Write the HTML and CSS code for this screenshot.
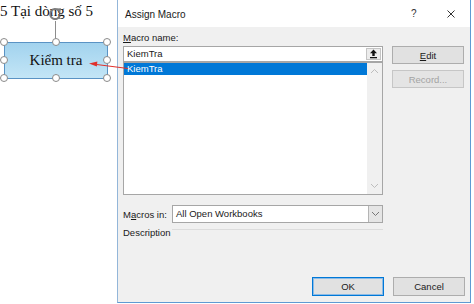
FILE: index.html
```html
<!DOCTYPE html>
<html lang="vi">
<head>
  <meta charset="UTF-8">
  <title>Assign Macro</title>
  <link rel="stylesheet" href="styles.css">
</head>
<body>
  <!-- worksheet area with the shape -->
  <div class="sheet">
    <p class="cell-text">5 Tại dòng số 5</p>
    <div class="rotate-line"></div>
    <svg class="rotate-handle" width="14" height="14" viewBox="0 0 14 14">
      <path d="M10.6 3.4 A5 5 0 1 0 12 8.4" fill="none" stroke="#7d7d7d" stroke-width="2"/>
      <polygon points="8,1.6 13,1.2 12.2,6.2" fill="#7d7d7d"/>
    </svg>
    <div class="shape">Kiểm tra</div>
    <span class="handle h-tl"></span>
    <span class="handle h-tc"></span>
    <span class="handle h-tr"></span>
    <span class="handle h-ml"></span>
    <span class="handle h-mr"></span>
    <span class="handle h-bl"></span>
    <span class="handle h-bc"></span>
    <span class="handle h-br"></span>
  </div>

  <div class="dialog">
    <div class="title-bar">
      <span class="title">Assign Macro</span>
      <span class="help">?</span>
      <svg class="close" width="8" height="8" viewBox="0 0 8 8">
        <path d="M0.5 0.5 L7.5 7.5 M7.5 0.5 L0.5 7.5" stroke="#333" stroke-width="1"/>
      </svg>
    </div>

    <div class="dialog-body">
      <div class="main-col">
        <div class="field-label"><u>M</u>acro name:</div>
        <div class="name-box">
          <span class="name-value">KiemTra</span>
          <span class="collapse-btn">
            <svg width="9" height="10" viewBox="0 0 9 10">
              <polygon points="4.5,0.5 8,4.2 1,4.2" fill="#111"/>
              <rect x="3.3" y="4" width="2.4" height="3" fill="#111"/>
              <rect x="1" y="8" width="7" height="1.3" fill="#111"/>
            </svg>
          </span>
        </div>
        <div class="macro-list">
          <div class="list-items">
            <div class="list-item selected">KiemTra</div>
          </div>
          <div class="scrollbar">
            <svg width="9" height="6" viewBox="0 0 9 6"><path d="M1 5 L4.5 1.5 L8 5" fill="none" stroke="#bdbdbd" stroke-width="1"/></svg>
            <svg width="9" height="6" viewBox="0 0 9 6"><path d="M1 1 L4.5 4.5 L8 1" fill="none" stroke="#bdbdbd" stroke-width="1"/></svg>
          </div>
        </div>
        <div class="macros-in">
          <span class="row-label">M<u>a</u>cros in:</span>
          <div class="select">
            <span class="select-value">All Open Workbooks</span>
            <span class="drop-btn">
              <svg width="9" height="6" viewBox="0 0 9 6"><path d="M1 1 L4.5 4.5 L8 1" fill="none" stroke="#777" stroke-width="1"/></svg>
            </span>
          </div>
        </div>
        <div class="description">
          <span class="row-label">Description</span>
          <span class="desc-line"></span>
        </div>
      </div>
      <div class="side-col">
        <button class="btn"><u>E</u>dit</button>
        <button class="btn" disabled>Record...</button>
      </div>
    </div>

    <div class="dialog-footer">
      <button class="btn btn-default">OK</button>
      <button class="btn">Cancel</button>
    </div>
  </div>

  <!-- red pointer from the list item to the shape -->
  <svg class="pointer-arrow" width="474" height="304" viewBox="0 0 474 304">
    <line x1="128" y1="68.5" x2="95" y2="64.3" stroke="#e0302c" stroke-width="1"/>
    <polygon points="89,63.6 97.4,61.4 96.8,66.6" fill="#e0302c"/>
  </svg>
</body>
</html>
```

FILE: styles.css
```css
* {
  margin: 0;
  padding: 0;
  box-sizing: border-box;
}

body {
  display: flex;
  width: 474px;
  height: 304px;
  overflow: hidden;
  background: #fff;
  font-family: "Liberation Sans", Arial, sans-serif;
  font-size: 9.5px;
  color: #1a1a1a;
}

/* Worksheet side */
.sheet {
  position: relative;
  width: 117px;
  flex-shrink: 0;
}

.cell-text {
  padding-top: 2px;
  font-family: "Liberation Serif", "Times New Roman", serif;
  font-size: 15px;
  line-height: 18px;
  white-space: nowrap;
  color: #111;
}

.rotate-line {
  position: absolute;
  left: 55px;
  top: 21px;
  width: 1px;
  height: 18px;
  background: #8c8c8c;
}

.rotate-handle {
  position: absolute;
  z-index: 2;
  left: 48px;
  top: 7px;
}

.shape {
  position: absolute;
  left: 4px;
  top: 42px;
  width: 104px;
  height: 37px;
  border: 1px solid #5a93c4;
  background: linear-gradient(to bottom, #a2d3ee, #c3e5f6);
  display: flex;
  align-items: center;
  justify-content: center;
  font-family: "Liberation Serif", "Times New Roman", serif;
  font-size: 15px;
  color: #111;
}

.handle {
  position: absolute;
  width: 8px;
  height: 8px;
  border: 1px solid #8a8a8a;
  border-radius: 50%;
  background: #fff;
}

.h-tl { left: 0; top: 38px; }
.h-tc { left: 52px; top: 38px; }
.h-tr { left: 103px; top: 38px; }
.h-ml { left: 0; top: 56px; }
.h-mr { left: 103px; top: 56px; }
.h-bl { left: 0; top: 74px; }
.h-bc { left: 52px; top: 74px; }
.h-br { left: 103px; top: 74px; }

/* Dialog */
.dialog {
  width: 354px;
  height: 303px;
  flex-shrink: 0;
  display: flex;
  flex-direction: column;
  background: #f0f0f0;
  border-left: 1px solid #93b6d9;
  border-right: 1px solid #5f9ad2;
  border-bottom: 1px solid #5f9ad2;
}

.title-bar {
  height: 27px;
  display: flex;
  align-items: center;
  background: #fff;
  padding-left: 7px;
  font-size: 10px;
}

.title {
  flex: 1;
  padding-top: 2px;
}

.help {
  width: 5px;
  margin-right: 31px;
  font-size: 10px;
  color: #333;
}

.close {
  margin-right: 15px;
}

.dialog-body {
  flex: 1;
  display: flex;
  gap: 9px;
  padding: 0 5px;
}

.main-col {
  width: 260px;
  display: flex;
  flex-direction: column;
}

.field-label {
  margin-top: 5px;
  line-height: 12px;
  margin-bottom: 2px;
}

.name-box {
  height: 16px;
  display: flex;
  align-items: stretch;
  background: #fff;
  border: 1px solid #a6a6a6;
}

.name-value {
  flex: 1;
  padding-left: 3px;
  line-height: 14px;
}

.collapse-btn {
  width: 15px;
  margin: 1px;
  display: flex;
  align-items: center;
  justify-content: center;
  background: #ececec;
  border: 1px solid #c4c4c4;
}

.macro-list {
  height: 133px;
  display: flex;
  background: #fff;
  border: 1px solid #a6a6a6;
}

.list-items {
  flex: 1;
}

.list-item {
  height: 12px;
  line-height: 12px;
  padding-left: 3px;
}

.list-item.selected {
  background: #0078d7;
  color: #fff;
}

.scrollbar {
  width: 15px;
  display: flex;
  flex-direction: column;
  justify-content: space-between;
  align-items: center;
  padding: 5px 0;
  background: #f0f0f0;
}

.macros-in {
  margin-top: 10px;
  display: flex;
  align-items: center;
}

.row-label {
  width: 49px;
  flex-shrink: 0;
}

.select {
  flex: 1;
  height: 18px;
  display: flex;
  background: #fff;
  border: 1px solid #a6a6a6;
}

.select-value {
  flex: 1;
  padding-left: 3px;
  line-height: 16px;
}

.drop-btn {
  width: 14px;
  display: flex;
  align-items: center;
  justify-content: center;
  background: #e5e5e5;
  border-left: 1px solid #b4b4b4;
}

.description {
  margin-top: 4px;
  height: 12px;
  line-height: 12px;
  display: flex;
  align-items: flex-start;
  white-space: nowrap;
}

.desc-line {
  flex: 1;
  height: 1px;
  margin-top: 2px;
  background: #dcdcdc;
}

.side-col {
  width: 72px;
  padding-top: 19px;
  display: flex;
  flex-direction: column;
  gap: 6px;
}

.btn {
  height: 18px;
  font-family: "Liberation Sans", Arial, sans-serif;
  font-size: 9.5px;
  color: #1a1a1a;
  background: #e1e1e1;
  border: 1px solid #adadad;
}

.btn:disabled {
  color: #a3a3a3;
  background: #e4e4e4;
  border-color: #c6c6c6;
}

.dialog-footer {
  display: flex;
  justify-content: flex-end;
  gap: 9px;
  padding: 0 5px 6px;
}

.dialog-footer .btn {
  width: 72px;
  height: 19px;
}

.btn-default {
  border-color: #0078d7;
  box-shadow: inset 0 0 0 1px #8cbbe6;
}

.pointer-arrow {
  position: absolute;
  left: 0;
  top: 0;
  pointer-events: none;
}
```
